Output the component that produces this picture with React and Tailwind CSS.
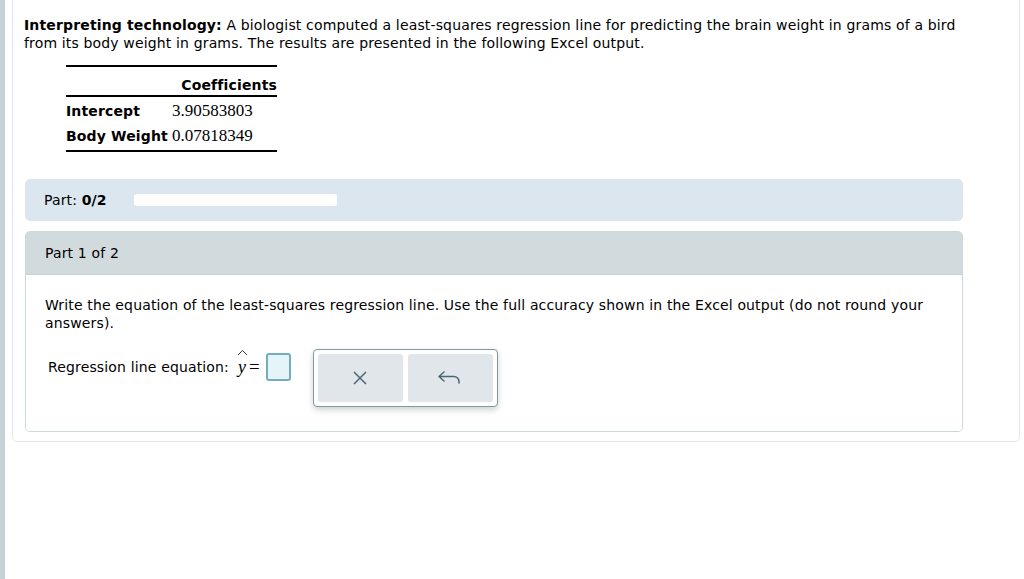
export default function App() {
  return (
    <div className="flex min-h-[579px] bg-white text-[14px] tracking-[0.15px] text-black" style={{ fontFamily: '"DejaVu Sans", Verdana, sans-serif' }}>
      {/* left rail */}
      <div className="w-[5px] shrink-0 bg-[#c6d2d8]"></div>

      <div className="flex-1 pl-[7px] pr-[4px]">
        <div className="border border-t-0 border-[#e2e8eb] rounded-b-[5px] pl-[11px] pr-[56px] pb-[9px]">
          {/* Question */}
          <p className="pt-[16px] leading-[18px]">
            <span className="font-bold">Interpreting technology:</span> A biologist computed a least-squares regression line for predicting the brain weight in grams of a bird from its body weight in grams. The results are presented in the following Excel output.
          </p>

          {/* Excel table */}
          <div className="ml-[42px] mt-[13px] w-[211px] tracking-normal">
            <div className="h-[2px] bg-black"></div>
            <div className="flex justify-end pt-[9px] font-bold leading-[18px] tracking-[0.15px]">Coefficients</div>
            <div className="h-[2px] bg-black mt-[1px]"></div>
            <div className="flex items-center h-[26px] pt-[2px]">
              <span className="w-[106px] font-bold tracking-[0.15px]">Intercept</span>
              <span className="text-[17px]" style={{ fontFamily: '"Liberation Serif", serif' }}>3.90583803</span>
            </div>
            <div className="flex items-center h-[26px]">
              <span className="w-[106px] font-bold tracking-[0.15px]">Body Weight</span>
              <span className="text-[17px]" style={{ fontFamily: '"Liberation Serif", serif' }}>0.07818349</span>
            </div>
            <div className="h-[2px] bg-black mt-[1px]"></div>
          </div>

          {/* Progress */}
          <div className="mt-[27px] ml-[1px] h-[42px] rounded-[5px] bg-[#dbe6ef] flex items-center pl-[19px]">
            <span>Part: <span className="font-bold">0/2</span></span>
            <div className="ml-[27px] h-[12px] w-[203px] rounded-[3px] bg-white"></div>
          </div>

          {/* Part card */}
          <div className="mt-[10px] ml-[1px] rounded-[5px] border border-[#cdd6da] overflow-hidden">
            <div className="h-[43px] bg-[#d1dadd] flex items-center pl-[19px] border-b border-[#c6d0d4]">Part 1 of 2</div>
            <div className="pl-[19px] pr-[20px] pt-[21px] pb-[24px] bg-white">
              <p className="leading-[18px]">
                Write the equation of the least-squares regression line. Use the full accuracy shown in the Excel output (do not round your answers).
              </p>

              <div className="mt-[16px] flex items-start">
                <div className="flex items-center pt-[5px] pl-[3px]">
                  <span>Regression line equation:</span>
                  <span className="relative ml-[9px] text-[18px] italic tracking-normal" style={{ fontFamily: '"Liberation Serif", serif' }}>
                    y
                    <svg className="absolute left-[-1px] top-[-5px]" width="11" height="7" viewBox="0 0 11 7" fill="none" stroke="#333" strokeWidth="1">
                      <path d="M1 6 L5.5 1.5 L10 6" />
                    </svg>
                  </span>
                  <span className="ml-[3px] text-[19px] tracking-normal" style={{ fontFamily: '"Liberation Serif", serif' }}>=</span>
                  <div className="ml-[6px] w-[25px] h-[28px] rounded-[3px] border-2 border-[#74aebb] bg-[#e5f4f8]"></div>
                </div>

                <div className="ml-[22px] mt-[1px] flex gap-[5px] p-[4px] rounded-[4px] border border-[#7d9aa3] bg-white shadow-[0_3px_6px_rgba(0,0,0,0.18)]">
                  <button className="w-[85px] h-[48px] rounded-[3px] bg-[#e0e6e9] flex items-center justify-center">
                    <svg width="18" height="18" viewBox="0 0 18 18" fill="none" stroke="#4d6671" strokeWidth="1.5">
                      <path d="M3 3 L15 15 M15 3 L3 15" />
                    </svg>
                  </button>
                  <button className="w-[85px] h-[48px] rounded-[3px] bg-[#e0e6e9] flex items-center justify-center">
                    <svg width="26" height="18" viewBox="0 0 26 18" fill="none" stroke="#4d6671" strokeWidth="1.5" strokeLinecap="round" strokeLinejoin="round">
                      <path d="M7 3 L2 7.5 L7 12 M2 7.5 H17 A5 5 0 0 1 22 12.5 V14" />
                    </svg>
                  </button>
                </div>
              </div>
            </div>
          </div>
        </div>
      </div>
    </div>
  )
}
